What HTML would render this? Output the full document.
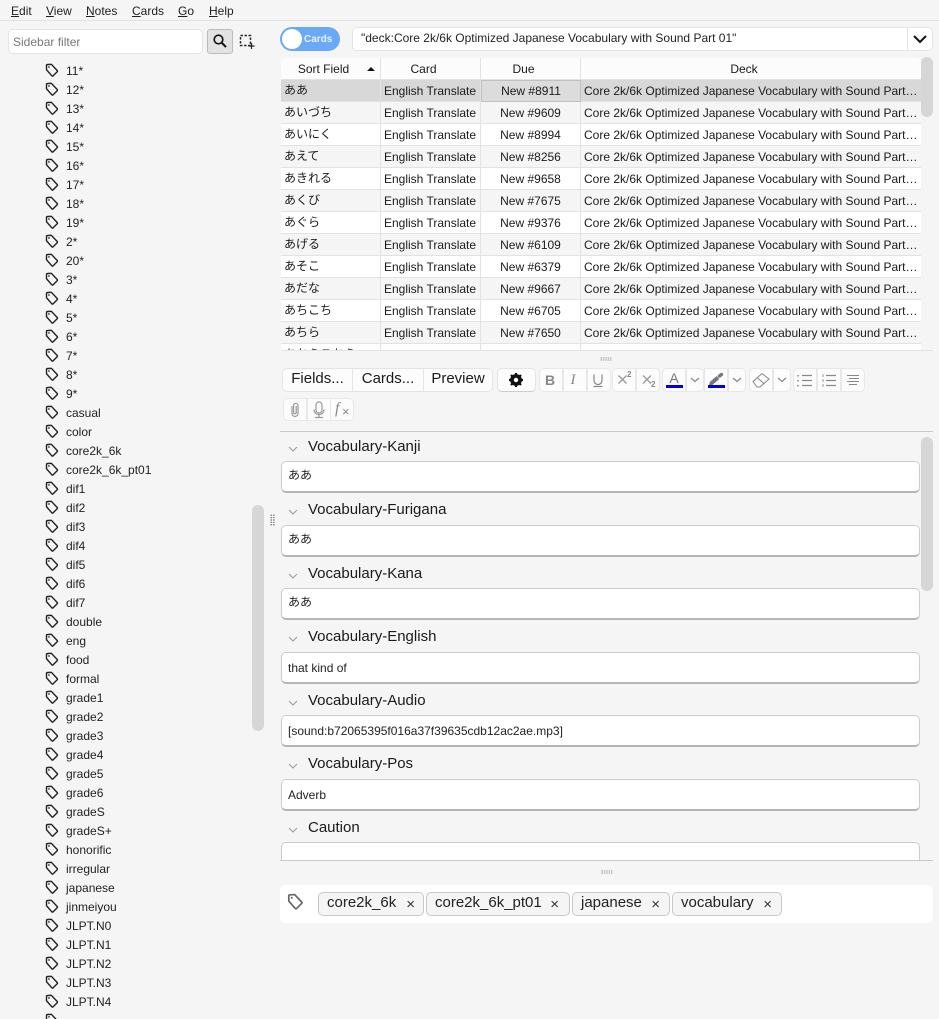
<!DOCTYPE html>
<html><head><meta charset="utf-8"><style>
*{box-sizing:border-box}
html{margin:0;padding:0;width:939px;height:1019px;overflow:hidden}
body{margin:0;padding:0;width:939px;height:1019px;overflow:hidden;position:relative;background:#f5f5f5;color:#1a1a1a;font:12px "Liberation Sans","Noto Sans CJK JP",sans-serif}
#w{position:absolute;left:0;top:0;width:939px;height:1019px;overflow:hidden}
.a{position:absolute}
.m{position:absolute;top:4px;font-size:12px;line-height:14px;color:#222}
.m u{text-decoration:underline}
.s{position:absolute;left:66px;font-size:12px;line-height:18px;white-space:nowrap;color:#222}
.t{position:absolute;left:45px;width:15px;height:15px;margin-top:1px;color:#222}
.tb{position:absolute;left:281px;top:58px;width:640px;height:293px;background:#fff;overflow:hidden;border-radius:5px 5px 0 0}
.r{position:absolute;left:0;width:640px;height:22px;border-bottom:1px solid #e2e2e2;line-height:23px;white-space:nowrap}
.r.o{background:#f5f5f5}
.r.sel{background:#d8d8d8}
.r span{position:absolute;top:0;height:22px;border-right:1px solid #e2e2e2;overflow:hidden}
.r span.c1{line-height:21px}
.c1{left:0;width:100px;padding-left:3px}
.c2{left:100px;width:100px;padding-left:3px}
.c3{left:200px;width:100px;text-align:center}
.c4{left:300px;width:339px;padding-left:3px;border-right:0!important}
.h{position:absolute;top:0;height:22px;line-height:22px;text-align:center;padding-right:14px;border-right:1px solid #e2e2e2;border-bottom:1px solid #e2e2e2;background:#fcfcfc}
.btn{position:absolute;top:368px;height:24px;padding-top:1px;background:#fcfcfc;border:1px solid #e4e4e4;font-size:15px;line-height:18px;text-align:center;color:#1a1a1a}
.ib{position:absolute;background:#fcfcfc;border:1px solid #e8e8e8;width:24px;height:23px}
.ib svg{position:absolute;left:0;top:0}
.ib.r1{top:368px;height:24px}
.ib.r1>*{margin-top:1px}
.fl{position:absolute;left:308px;margin-top:1px;font-size:15px;line-height:20px;color:#1a1a1a;white-space:nowrap}
.ch{position:absolute;left:287px;width:12px;height:8px}
.fb{position:absolute;left:281px;width:639px;height:32px;background:#fff;border:1px solid #ccc;border-bottom:2px solid #b5b5b5;border-radius:5px;padding-left:6px;line-height:27px;font-size:12px;color:#222}
.fb.l{line-height:31px}
.tag{position:absolute;top:892px;height:24px;background:#f5f5f5;border:1px solid #c8c8c8;border-radius:5px;font-size:15px;line-height:19px;padding-left:8px;color:#222;white-space:nowrap}
.tag i{position:absolute;right:9px;top:4px;font-style:normal;font-size:15px;line-height:15px;color:#333}
.g{position:absolute;width:12px;height:4px;background-image:radial-gradient(#999 0.6px,transparent 0.7px);background-size:2.4px 2px}
</style></head><body><div id="w">
<svg width="0" height="0" style="position:absolute"><defs>
<symbol id="tg" viewBox="0 0 16 16"><path d="M1.6 2.8 Q1.6 1.6 2.8 1.6 L6.8 1.4 L13 8 Q13.6 8.7 13 9.3 L8.6 13.7 Q8 14.3 7.3 13.7 L1.6 7.2 Z" fill="none" stroke="currentColor" stroke-width="1.5" stroke-linejoin="round"/><circle cx="4.2" cy="4.2" r="0.9" fill="currentColor"/></symbol>
<symbol id="cv" viewBox="0 0 12 8"><path d="M2 2 L6 6 L10 2" fill="none" stroke="#999" stroke-width="1"/></symbol>
</defs></svg>

<div class="a" style="left:0;top:20px;width:939px;height:1px;background:#e2e2e2"></div>
<div class="m" style="left:11px"><u>E</u>dit</div>
<div class="m" style="left:46px"><u>V</u>iew</div>
<div class="m" style="left:86px"><u>N</u>otes</div>
<div class="m" style="left:132px"><u>C</u>ards</div>
<div class="m" style="left:178px"><u>G</u>o</div>
<div class="m" style="left:209px"><u>H</u>elp</div>

<div class="a" style="left:8px;top:29px;width:195px;height:25px;background:#fff;border:1px solid #e4e4e4;border-radius:5px;padding-left:4px;line-height:24px;color:#777">Sidebar filter</div>
<div class="a" style="left:207px;top:29px;width:26px;height:25px;background:#e2e2e2;border:1px solid #bbb;border-radius:3px"></div>
<svg class="a" style="left:212px;top:33px" width="16" height="16"><circle cx="6.5" cy="6.5" r="4.3" fill="none" stroke="#111" stroke-width="1.6"/><path d="M9.8 9.8 L14 14" stroke="#111" stroke-width="2"/></svg>
<svg class="a" style="left:239px;top:34px" width="16" height="16"><rect x="1.5" y="1.5" width="10" height="10" fill="none" stroke="#222" stroke-width="1.5" stroke-dasharray="2.4 1.6"/><path d="M12.5 9 V15 M9.5 12 H15.5" stroke="#222" stroke-width="1.2"/></svg>

<svg class="t" style="top:62px"><use href="#tg"/></svg><div class="s" style="top:62px">11*</div>
<svg class="t" style="top:81px"><use href="#tg"/></svg><div class="s" style="top:81px">12*</div>
<svg class="t" style="top:100px"><use href="#tg"/></svg><div class="s" style="top:100px">13*</div>
<svg class="t" style="top:119px"><use href="#tg"/></svg><div class="s" style="top:119px">14*</div>
<svg class="t" style="top:138px"><use href="#tg"/></svg><div class="s" style="top:138px">15*</div>
<svg class="t" style="top:157px"><use href="#tg"/></svg><div class="s" style="top:157px">16*</div>
<svg class="t" style="top:176px"><use href="#tg"/></svg><div class="s" style="top:176px">17*</div>
<svg class="t" style="top:195px"><use href="#tg"/></svg><div class="s" style="top:195px">18*</div>
<svg class="t" style="top:214px"><use href="#tg"/></svg><div class="s" style="top:214px">19*</div>
<svg class="t" style="top:233px"><use href="#tg"/></svg><div class="s" style="top:233px">2*</div>
<svg class="t" style="top:252px"><use href="#tg"/></svg><div class="s" style="top:252px">20*</div>
<svg class="t" style="top:271px"><use href="#tg"/></svg><div class="s" style="top:271px">3*</div>
<svg class="t" style="top:290px"><use href="#tg"/></svg><div class="s" style="top:290px">4*</div>
<svg class="t" style="top:309px"><use href="#tg"/></svg><div class="s" style="top:309px">5*</div>
<svg class="t" style="top:328px"><use href="#tg"/></svg><div class="s" style="top:328px">6*</div>
<svg class="t" style="top:347px"><use href="#tg"/></svg><div class="s" style="top:347px">7*</div>
<svg class="t" style="top:366px"><use href="#tg"/></svg><div class="s" style="top:366px">8*</div>
<svg class="t" style="top:385px"><use href="#tg"/></svg><div class="s" style="top:385px">9*</div>
<svg class="t" style="top:404px"><use href="#tg"/></svg><div class="s" style="top:404px">casual</div>
<svg class="t" style="top:423px"><use href="#tg"/></svg><div class="s" style="top:423px">color</div>
<svg class="t" style="top:442px"><use href="#tg"/></svg><div class="s" style="top:442px">core2k_6k</div>
<svg class="t" style="top:461px"><use href="#tg"/></svg><div class="s" style="top:461px">core2k_6k_pt01</div>
<svg class="t" style="top:480px"><use href="#tg"/></svg><div class="s" style="top:480px">dif1</div>
<svg class="t" style="top:499px"><use href="#tg"/></svg><div class="s" style="top:499px">dif2</div>
<svg class="t" style="top:518px"><use href="#tg"/></svg><div class="s" style="top:518px">dif3</div>
<svg class="t" style="top:537px"><use href="#tg"/></svg><div class="s" style="top:537px">dif4</div>
<svg class="t" style="top:556px"><use href="#tg"/></svg><div class="s" style="top:556px">dif5</div>
<svg class="t" style="top:575px"><use href="#tg"/></svg><div class="s" style="top:575px">dif6</div>
<svg class="t" style="top:594px"><use href="#tg"/></svg><div class="s" style="top:594px">dif7</div>
<svg class="t" style="top:613px"><use href="#tg"/></svg><div class="s" style="top:613px">double</div>
<svg class="t" style="top:632px"><use href="#tg"/></svg><div class="s" style="top:632px">eng</div>
<svg class="t" style="top:651px"><use href="#tg"/></svg><div class="s" style="top:651px">food</div>
<svg class="t" style="top:670px"><use href="#tg"/></svg><div class="s" style="top:670px">formal</div>
<svg class="t" style="top:689px"><use href="#tg"/></svg><div class="s" style="top:689px">grade1</div>
<svg class="t" style="top:708px"><use href="#tg"/></svg><div class="s" style="top:708px">grade2</div>
<svg class="t" style="top:727px"><use href="#tg"/></svg><div class="s" style="top:727px">grade3</div>
<svg class="t" style="top:746px"><use href="#tg"/></svg><div class="s" style="top:746px">grade4</div>
<svg class="t" style="top:765px"><use href="#tg"/></svg><div class="s" style="top:765px">grade5</div>
<svg class="t" style="top:784px"><use href="#tg"/></svg><div class="s" style="top:784px">grade6</div>
<svg class="t" style="top:803px"><use href="#tg"/></svg><div class="s" style="top:803px">gradeS</div>
<svg class="t" style="top:822px"><use href="#tg"/></svg><div class="s" style="top:822px">gradeS+</div>
<svg class="t" style="top:841px"><use href="#tg"/></svg><div class="s" style="top:841px">honorific</div>
<svg class="t" style="top:860px"><use href="#tg"/></svg><div class="s" style="top:860px">irregular</div>
<svg class="t" style="top:879px"><use href="#tg"/></svg><div class="s" style="top:879px">japanese</div>
<svg class="t" style="top:898px"><use href="#tg"/></svg><div class="s" style="top:898px">jinmeiyou</div>
<svg class="t" style="top:917px"><use href="#tg"/></svg><div class="s" style="top:917px">JLPT.N0</div>
<svg class="t" style="top:936px"><use href="#tg"/></svg><div class="s" style="top:936px">JLPT.N1</div>
<svg class="t" style="top:955px"><use href="#tg"/></svg><div class="s" style="top:955px">JLPT.N2</div>
<svg class="t" style="top:974px"><use href="#tg"/></svg><div class="s" style="top:974px">JLPT.N3</div>
<svg class="t" style="top:993px"><use href="#tg"/></svg><div class="s" style="top:993px">JLPT.N4</div>
<svg class="t" style="top:1012px"><use href="#tg"/></svg>

<div class="a" style="left:252px;top:505px;width:12px;height:226px;background:#d6d6d6;border-radius:6px"></div>
<div class="a" style="left:270px;top:514px;width:5px;height:12px;background-image:radial-gradient(#888 0.7px,transparent 0.8px);background-size:2.5px 2.4px"></div>

<div class="a" style="left:280px;top:27px;width:60px;height:24px;background:#6aa9f5;border-radius:12px"></div>
<div class="a" style="left:282px;top:29px;width:20px;height:20px;background:#fff;border-radius:50%"></div>
<div class="a" style="left:304px;top:33px;font-size:10px;font-weight:bold;line-height:14px;color:#e8f1fd">Cards</div>
<div class="a" style="left:352px;top:27px;width:581px;height:24px;background:#fff;border:1px solid #e4e4e4;border-radius:5px;padding-left:8px;line-height:21px;color:#222;font-size:12px">"deck:Core 2k/6k Optimized Japanese Vocabulary with Sound Part 01"</div>
<div class="a" style="left:907px;top:28px;width:1px;height:22px;background:#e4e4e4"></div>
<svg class="a" style="left:912px;top:34px" width="16" height="10"><path d="M2 2 L8 8 L14 2" fill="none" stroke="#111" stroke-width="2"/></svg>

<div class="tb">
<div class="h" style="left:0;width:100px">Sort Field</div>
<div class="a" style="left:86px;top:9px;width:0;height:0;border-left:4px solid transparent;border-right:4px solid transparent;border-bottom:4px solid #111"></div>
<div class="h" style="left:100px;width:100px">Card</div>
<div class="h" style="left:200px;width:100px">Due</div>
<div class="h" style="left:300px;width:340px;border-right:0">Deck</div>
<div class="r sel" style="top:22px"><span class="c1">ああ</span><span class="c2">English Translate</span><span class="c3" style="background:#dcdcdc;border:1px solid #c0c0c0;line-height:21px">New #8911</span><span class="c4">Core 2k/6k Optimized Japanese Vocabulary with Sound Part…</span></div>
<div class="r o" style="top:44px"><span class="c1">あいづち</span><span class="c2">English Translate</span><span class="c3">New #9609</span><span class="c4">Core 2k/6k Optimized Japanese Vocabulary with Sound Part…</span></div>
<div class="r" style="top:66px"><span class="c1">あいにく</span><span class="c2">English Translate</span><span class="c3">New #8994</span><span class="c4">Core 2k/6k Optimized Japanese Vocabulary with Sound Part…</span></div>
<div class="r o" style="top:88px"><span class="c1">あえて</span><span class="c2">English Translate</span><span class="c3">New #8256</span><span class="c4">Core 2k/6k Optimized Japanese Vocabulary with Sound Part…</span></div>
<div class="r" style="top:110px"><span class="c1">あきれる</span><span class="c2">English Translate</span><span class="c3">New #9658</span><span class="c4">Core 2k/6k Optimized Japanese Vocabulary with Sound Part…</span></div>
<div class="r o" style="top:132px"><span class="c1">あくび</span><span class="c2">English Translate</span><span class="c3">New #7675</span><span class="c4">Core 2k/6k Optimized Japanese Vocabulary with Sound Part…</span></div>
<div class="r" style="top:154px"><span class="c1">あぐら</span><span class="c2">English Translate</span><span class="c3">New #9376</span><span class="c4">Core 2k/6k Optimized Japanese Vocabulary with Sound Part…</span></div>
<div class="r o" style="top:176px"><span class="c1">あげる</span><span class="c2">English Translate</span><span class="c3">New #6109</span><span class="c4">Core 2k/6k Optimized Japanese Vocabulary with Sound Part…</span></div>
<div class="r" style="top:198px"><span class="c1">あそこ</span><span class="c2">English Translate</span><span class="c3">New #6379</span><span class="c4">Core 2k/6k Optimized Japanese Vocabulary with Sound Part…</span></div>
<div class="r o" style="top:220px"><span class="c1">あだな</span><span class="c2">English Translate</span><span class="c3">New #9667</span><span class="c4">Core 2k/6k Optimized Japanese Vocabulary with Sound Part…</span></div>
<div class="r" style="top:242px"><span class="c1">あちこち</span><span class="c2">English Translate</span><span class="c3">New #6705</span><span class="c4">Core 2k/6k Optimized Japanese Vocabulary with Sound Part…</span></div>
<div class="r o" style="top:264px"><span class="c1">あちら</span><span class="c2">English Translate</span><span class="c3">New #7650</span><span class="c4">Core 2k/6k Optimized Japanese Vocabulary with Sound Part…</span></div>
<div class="r" style="top:286px"><span class="c1">あちらこちら</span><span class="c2"></span><span class="c3"></span><span class="c4"></span></div>
</div>
<div class="a" style="left:281px;top:350px;width:652px;height:1px;background:#e2e2e2"></div>
<div class="a" style="left:921px;top:57px;width:12px;height:60px;background:#d6d6d6;border-radius:6px"></div>
<div class="g" style="left:600px;top:357px"></div>

<div class="btn" style="left:282px;width:70px;border-radius:5px 0 0 5px;border-right:0">Fields...</div>
<div class="btn" style="left:352px;width:71px;border-right:0">Cards...</div>
<div class="btn" style="left:423px;width:70px;border-radius:0 5px 5px 0">Preview</div>
<div class="btn" style="left:497px;width:39px;border-radius:5px;border-bottom:1px solid #ccc"></div>
<svg class="a" style="left:508px;top:372px" width="16" height="16" viewBox="0 0 16 16"><circle cx="8" cy="8" r="4.4" fill="none" stroke="#111" stroke-width="3"/><path d="M8 1 V15 M1 8 H15 M3 3 L13 13 M13 3 L3 13" stroke="#111" stroke-width="2.2"/><circle cx="8" cy="8" r="2.2" fill="#fcfcfc"/></svg>

<div class="ib r1" style="left:539px;border-radius:5px 0 0 5px"><span class="a" style="left:0;width:20px;text-align:center;top:1px;font:bold 14px/18px 'Liberation Sans';color:#888">B</span></div>
<div class="ib r1" style="left:563px"><span class="a" style="left:0;width:18px;text-align:center;top:1px;font:italic 15px/18px 'Liberation Serif';color:#888">I</span></div>
<div class="ib r1" style="left:587px;border-radius:0 5px 5px 0"><svg width="22" height="21"><path d="M6 4.5 V10.5 A4 4 0 0 0 14 10.5 V4.5 M5.5 16.5 H14.5" fill="none" stroke="#888" stroke-width="1.2"/></svg></div>
<div class="ib r1" style="left:612px;border-radius:5px 0 0 5px"><svg width="22" height="21"><path d="M5.5 5.5 L13.5 13.5 M13.5 5.5 L5.5 13.5" stroke="#999" stroke-width="1.3"/></svg><span class="a" style="left:14px;top:0;font:bold 8px/9px 'Liberation Sans';color:#888">2</span></div>
<div class="ib r1" style="left:636px;border-radius:0 5px 5px 0"><svg width="22" height="21"><path d="M6 5.5 L14 13.5 M14 5.5 L6 13.5" stroke="#999" stroke-width="1.3"/></svg><span class="a" style="left:14px;top:10px;font:bold 8px/9px 'Liberation Sans';color:#888">2</span></div>
<div class="ib r1" style="left:662px;border-radius:5px 0 0 5px"><span class="a" style="left:0;width:22px;text-align:center;top:0;font:14px/16px 'Liberation Sans';color:#777">A</span><span class="a" style="left:3px;top:15px;width:17px;height:3px;background:#0000e6"></span></div>
<div class="ib r1" style="left:686px;width:18px;border-radius:0 5px 5px 0"><svg width="16" height="21"><path d="M4 8 L8 11.5 L12 8" fill="none" stroke="#888" stroke-width="1.2"/></svg></div>
<div class="ib r1" style="left:704px"><svg width="22" height="21"><path d="M6 13.5 L13 7.5" stroke="#777" stroke-width="4"/><path d="M14.5 6 L16.5 4.5" stroke="#777" stroke-width="3.4" stroke-linecap="round"/><path d="M4 15 H8 L5 12 Z" fill="#777"/></svg><span class="a" style="left:3px;top:15px;width:17px;height:3px;background:#0000e6"></span></div>
<div class="ib r1" style="left:728px;width:18px;border-radius:0 5px 5px 0"><svg width="16" height="21"><path d="M4 8 L8 11.5 L12 8" fill="none" stroke="#888" stroke-width="1.2"/></svg></div>
<div class="ib r1" style="left:749px;border-radius:5px 0 0 5px"><svg width="22" height="21"><path d="M3 11.5 L12 3.5 L19 9 L10 17 H7 Z M7 7.5 L14.5 14" fill="none" stroke="#888" stroke-width="1"/></svg></div>
<div class="ib r1" style="left:773px;width:18px;border-radius:0 5px 5px 0"><svg width="16" height="21"><path d="M4 8 L8 11.5 L12 8" fill="none" stroke="#888" stroke-width="1.2"/></svg></div>
<div class="ib r1" style="left:793px;border-radius:5px 0 0 5px"><svg width="22" height="21"><path d="M8 5.5 H18 M8 10.5 H18 M8 15.5 H18" stroke="#888" stroke-width="1.2"/><path d="M4 5 V6.5 M4 10 V11.5 M4 15 V16.5" stroke="#888" stroke-width="1.6"/></svg></div>
<div class="ib r1" style="left:817px"><svg width="22" height="21"><path d="M8 5.5 H18 M8 10.5 H18 M8 15.5 H18" stroke="#888" stroke-width="1.2"/><path d="M5 4 V7 M5 9 V12 M5 14 V17" stroke="#aaa" stroke-width="1.2"/></svg></div>
<div class="ib r1" style="left:841px;border-radius:0 5px 5px 0"><svg width="22" height="21"><path d="M5 5.5 H17 M7 8.5 H17 M5 11.5 H17 M7 14.5 H15" stroke="#888" stroke-width="1.1"/></svg></div>

<div class="ib" style="left:283px;top:398px;border-radius:5px 0 0 5px"><svg width="22" height="21"><path d="M8 7 V14.5 A3 3 0 0 0 14 14.5 V6.5 A2.2 2.2 0 0 0 9.6 6.5 V13.5 A1.3 1.3 0 0 0 12.2 13.5 V7" fill="none" stroke="#999" stroke-width="1.2"/></svg></div>
<div class="ib" style="left:307px;top:398px"><svg width="22" height="21"><rect x="8" y="3" width="6" height="11" rx="3" fill="none" stroke="#999" stroke-width="1.2"/><path d="M6 10.5 A5 5 0 0 0 16 10.5 M11 15.5 V18 M7 18.5 H15" fill="none" stroke="#999" stroke-width="1.2"/></svg></div>
<div class="ib" style="left:330px;top:398px;border-radius:0 5px 5px 0"><span class="a" style="left:4px;top:1px;font:italic 16px/18px 'Liberation Serif';color:#888">f</span><span class="a" style="left:11px;top:6px;font:13px/14px 'Liberation Sans';color:#888">×</span></div>

<div class="a" style="left:280px;top:431px;width:653px;height:1px;background:#c9c9c9"></div>
<div class="a" style="left:921px;top:437px;width:12px;height:154px;background:#d6d6d6;border-radius:6px"></div>

<svg class="ch" style="top:445px"><use href="#cv"/></svg><div class="fl" style="top:436px">Vocabulary-Kanji</div>
<div class="fb" style="top:461px">ああ</div>
<svg class="ch" style="top:508px"><use href="#cv"/></svg><div class="fl" style="top:499px">Vocabulary-Furigana</div>
<div class="fb" style="top:525px">ああ</div>
<svg class="ch" style="top:572px"><use href="#cv"/></svg><div class="fl" style="top:563px">Vocabulary-Kana</div>
<div class="fb" style="top:588px">ああ</div>
<svg class="ch" style="top:635px"><use href="#cv"/></svg><div class="fl" style="top:626px">Vocabulary-English</div>
<div class="fb l" style="top:652px">that kind of</div>
<svg class="ch" style="top:699px"><use href="#cv"/></svg><div class="fl" style="top:690px">Vocabulary-Audio</div>
<div class="fb l" style="top:715px">[sound:b72065395f016a37f39635cdb12ac2ae.mp3]</div>
<svg class="ch" style="top:762px"><use href="#cv"/></svg><div class="fl" style="top:753px">Vocabulary-Pos</div>
<div class="fb l" style="top:779px">Adverb</div>
<svg class="ch" style="top:826px"><use href="#cv"/></svg><div class="fl" style="top:817px">Caution</div>
<div class="fb" style="top:842px;height:19px;border-bottom:0;border-radius:5px 5px 0 0"></div>
<div class="a" style="left:280px;top:860px;width:653px;height:1px;background:#c9c9c9"></div>
<div class="g" style="left:601px;top:870px"></div>

<div class="a" style="left:280px;top:885px;width:653px;height:38px;background:#fff;border-radius:5px"></div>
<svg class="a" style="left:287px;top:893px;color:#666" width="18" height="18"><use href="#tg"/></svg>
<div class="tag" style="left:318px;width:106px;line-height:20px">core2k_6k<i style="right:8px">×</i></div>
<div class="tag" style="left:426px;width:144px;line-height:20px">core2k_6k_pt01<i style="right:10px">×</i></div>
<div class="tag" style="left:572px;width:98px;line-height:20px">japanese<i>×</i></div>
<div class="tag" style="left:672px;width:110px;line-height:20px">vocabulary<i>×</i></div>
</div></body></html>
